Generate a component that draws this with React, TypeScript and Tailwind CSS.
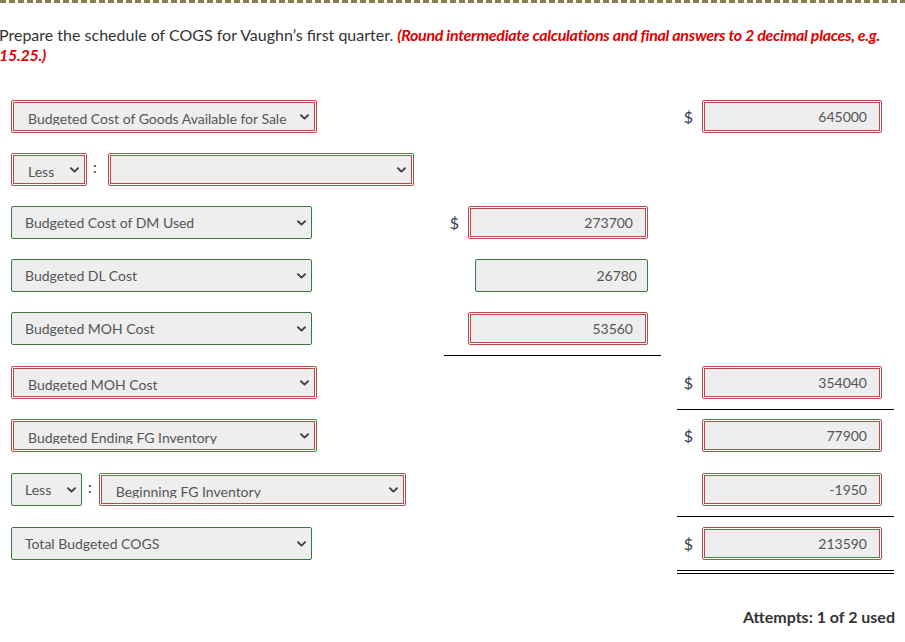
import React from "react";

const Chevron = () => (
  <svg width="9" height="6" viewBox="0 0 9 6" className="shrink-0">
    <path d="M1 1.2 L4.5 4.6 L8 1.2" fill="none" stroke="#444" strokeWidth="1.9" strokeLinecap="round" strokeLinejoin="round" />
  </svg>
);

const RedSelect = ({ text, w }: { text: string; w: string }) => (
  <div className={`h-[33px] ${w} shrink-0 border border-[#b94a48] rounded-[2px] p-px bg-white`}>
    <div className="h-full flex border border-[#b94a48] bg-[#eeeeee] pl-[14px] pr-[5px]">
      <div className="flex-1 pt-[7px]">
        <div className="h-[15px] overflow-hidden leading-[17px] text-[14px] text-[#555] whitespace-nowrap">{text}</div>
      </div>
      <div className="self-center">
        <Chevron />
      </div>
    </div>
  </div>
);

const GreenSelect = ({ text, w }: { text: string; w: string }) => (
  <div className={`h-[33px] ${w} shrink-0 border border-[#3c763d] rounded-[2px] bg-[#eeeeee] flex items-center pl-[13px] pr-[5px]`}>
    <span className="flex-1 leading-[17px] text-[14px] text-[#555] whitespace-nowrap">{text}</span>
    <Chevron />
  </div>
);

const RedInput = ({ v }: { v: string }) => (
  <div className="h-[33px] w-[180px] shrink-0 border border-[#b94a48] rounded-[2px] p-px bg-white">
    <div className="h-full border border-[#b94a48] bg-[#eeeeee] flex items-center justify-end pr-[12px] leading-[17px] text-[14px] text-[#555]">
      {v}
    </div>
  </div>
);

const GreenInput = ({ v }: { v: string }) => (
  <div className="h-[33px] w-[173px] shrink-0 border border-[#3c763d] rounded-[2px] bg-[#eeeeee] flex items-center justify-end pr-[10px] leading-[17px] text-[14px] text-[#555]">
    {v}
  </div>
);

const Dollar = () => <span className="mr-[9px] text-[16px] leading-[20px] text-[#2f3b48]">$</span>;

const Colon = ({ ml, mr }: { ml: string; mr: string }) => (
  <span className={`${ml} ${mr} text-[15px] leading-[20px] text-[#333] -translate-y-[3px]`}>:</span>
);

type RowProps = {
  h: string;
  left: React.ReactNode;
  mid?: React.ReactNode;
  right?: React.ReactNode;
  midLine?: boolean;
  rightLine?: "single" | "double";
};

const Row = ({ h, left, mid, right, midLine, rightLine }: RowProps) => (
  <div className={`${h} flex items-start`}>
    <div className="w-[444px] h-[33px] flex items-center pl-[11px]">{left}</div>
    <div className={`w-[217px] flex items-start justify-end pr-[13px] ${midLine ? "h-[44px] border-b border-black" : "h-[33px]"}`}>
      <div className="h-[33px] flex items-center">{mid}</div>
    </div>
    <div className="w-[16px]" />
    <div
      className={`w-[217px] flex items-start justify-end pr-[12px] ${
        rightLine === "single"
          ? "h-[44px] border-b border-black"
          : rightLine === "double"
          ? "h-[47px] border-b-[4px] border-double border-black"
          : "h-[33px]"
      }`}
    >
      <div className="h-[33px] flex items-center">{right}</div>
    </div>
  </div>
);

export default function App() {
  return (
    <div className="w-[905px] h-[642px] bg-white overflow-hidden [font-family:Lato,'Noto_Sans',sans-serif]">
      <div className="h-[3px] w-full bg-[repeating-linear-gradient(90deg,#8b7b4e_0px,#8b7b4e_6px,transparent_6px,transparent_9px)]" />
      <p className="mt-[22px] -ml-[1px] pr-[4px] text-[16px] leading-[20px] text-[#333]">
        Prepare the schedule of COGS for Vaughn’s first quarter.{" "}
        <span className="font-bold italic text-[#e00000] tracking-[-0.3px]">
          (Round intermediate calculations and final answers to 2 decimal places, e.g. 15.25.)
        </span>
      </p>

      <div className="mt-[35px]">
        <Row
          h="h-[53px]"
          left={<RedSelect text="Budgeted Cost of Goods Available for Sale" w="w-[306px]" />}
          right={
            <>
              <Dollar />
              <RedInput v="645000" />
            </>
          }
        />
        <Row
          h="h-[53px]"
          left={
            <>
              <RedSelect text="Less" w="w-[76px]" />
              <Colon ml="ml-[6px]" mr="mr-[11px]" />
              <RedSelect text="" w="w-[306px]" />
            </>
          }
        />
        <Row
          h="h-[53px]"
          left={<GreenSelect text="Budgeted Cost of DM Used" w="w-[301px]" />}
          mid={
            <>
              <Dollar />
              <RedInput v="273700" />
            </>
          }
        />
        <Row
          h="h-[53px]"
          left={<GreenSelect text="Budgeted DL Cost" w="w-[301px]" />}
          mid={<GreenInput v="26780" />}
        />
        <Row
          h="h-[54px]"
          left={<GreenSelect text="Budgeted MOH Cost" w="w-[301px]" />}
          mid={<RedInput v="53560" />}
          midLine
        />
        <Row
          h="h-[53px]"
          left={<RedSelect text="Budgeted MOH Cost" w="w-[306px]" />}
          right={
            <>
              <Dollar />
              <RedInput v="354040" />
            </>
          }
          rightLine="single"
        />
        <Row
          h="h-[54px]"
          left={<RedSelect text="Budgeted Ending FG Inventory" w="w-[306px]" />}
          right={
            <>
              <Dollar />
              <RedInput v="77900" />
            </>
          }
        />
        <Row
          h="h-[54px]"
          left={
            <>
              <GreenSelect text="Less" w="w-[71px]" />
              <Colon ml="ml-[6px]" mr="mr-[7px]" />
              <RedSelect text="Beginning FG Inventory" w="w-[307px]" />
            </>
          }
          right={<RedInput v="-1950" />}
          rightLine="single"
        />
        <Row
          h="h-[53px]"
          left={<GreenSelect text="Total Budgeted COGS" w="w-[301px]" />}
          right={
            <>
              <Dollar />
              <RedInput v="213590" />
            </>
          }
          rightLine="double"
        />
      </div>

      <div className="mt-[27px] pr-[10px] text-right text-[16px] leading-[20px] font-bold text-[#333]">
        Attempts: 1 of 2 used
      </div>
    </div>
  );
}
